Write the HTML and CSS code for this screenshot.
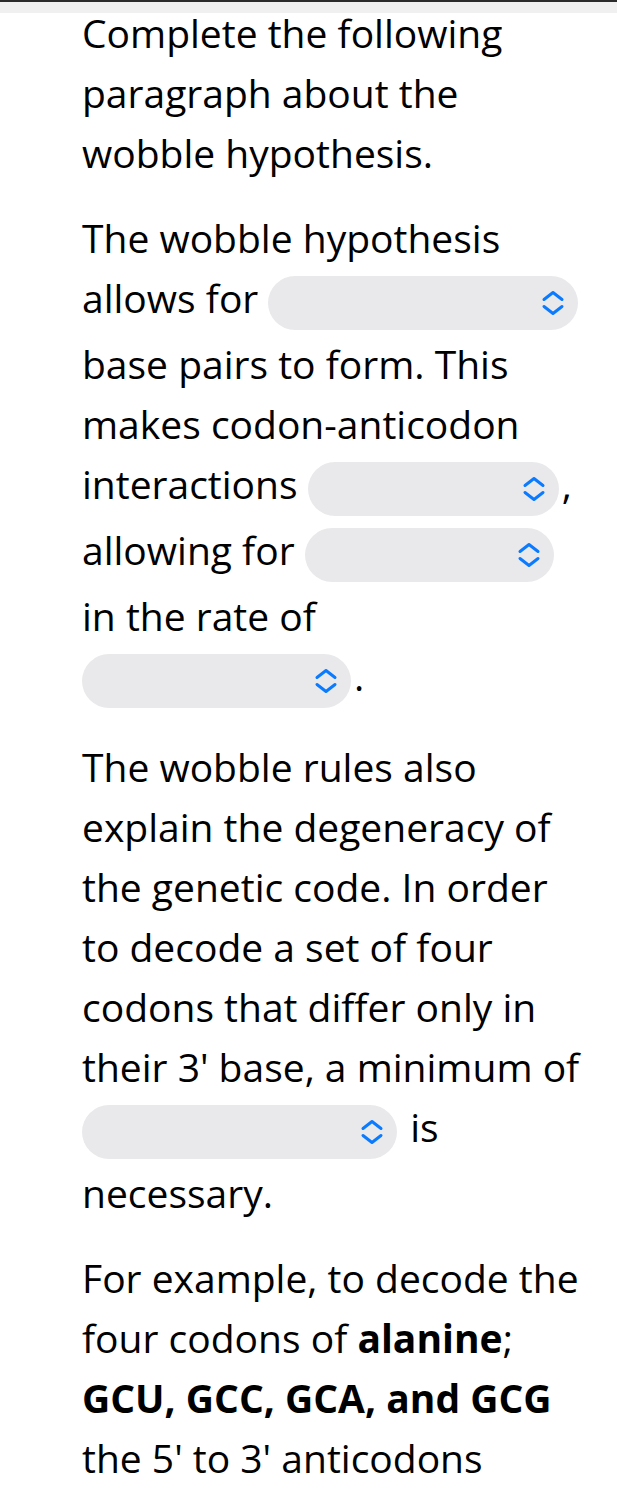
FILE: index.html
```html
<!DOCTYPE html>
<html lang="en">
<head>
<meta charset="utf-8">
<title>Wobble hypothesis</title>
<link rel="stylesheet" href="styles.css">
</head>
<body>
<div class="chrome">
  <div class="chrome-dark"></div>
  <div class="chrome-light"></div>
</div>
<main class="content">
  <p>Complete the following paragraph about the wobble hypothesis.</p>
  <p>The wobble hypothesis allows for <span class="dd w1"><svg class="chev" viewBox="0 0 24 26" width="24" height="26"><path d="M3 9.5 L12 2.5 L21 9.5 M3 16.5 L12 23.5 L21 16.5" fill="none" stroke="#0a7aff" stroke-width="3" stroke-linecap="round" stroke-linejoin="round"/></svg></span> base pairs to form. This makes codon-anticodon interactions <span class="dd w2"><svg class="chev" viewBox="0 0 24 26" width="24" height="26"><path d="M3 9.5 L12 2.5 L21 9.5 M3 16.5 L12 23.5 L21 16.5" fill="none" stroke="#0a7aff" stroke-width="3" stroke-linecap="round" stroke-linejoin="round"/></svg></span>, allowing for <span class="dd w3"><svg class="chev" viewBox="0 0 24 26" width="24" height="26"><path d="M3 9.5 L12 2.5 L21 9.5 M3 16.5 L12 23.5 L21 16.5" fill="none" stroke="#0a7aff" stroke-width="3" stroke-linecap="round" stroke-linejoin="round"/></svg></span> in the rate of <span class="dd w4"><svg class="chev" viewBox="0 0 24 26" width="24" height="26"><path d="M3 9.5 L12 2.5 L21 9.5 M3 16.5 L12 23.5 L21 16.5" fill="none" stroke="#0a7aff" stroke-width="3" stroke-linecap="round" stroke-linejoin="round"/></svg></span>.</p>
  <p>The wobble rules also explain the degeneracy of the genetic code. In order to decode a set of four codons that differ only in their 3' base, a minimum of <span class="dd w5"><svg class="chev" viewBox="0 0 24 26" width="24" height="26"><path d="M3 9.5 L12 2.5 L21 9.5 M3 16.5 L12 23.5 L21 16.5" fill="none" stroke="#0a7aff" stroke-width="3" stroke-linecap="round" stroke-linejoin="round"/></svg></span> is necessary.</p>
  <p>For example, to decode the four codons of <b>alanine</b>; <b>GCU, GCC, GCA, and GCG</b> the 5' to 3' anticodons</p>
</main>
</body>
</html>
```

FILE: styles.css
```css
html, body {
  margin: 0;
  padding: 0;
  background: #ffffff;
}

body {
  font-family: "Open Sans", "Noto Sans", "DejaVu Sans", sans-serif;
  font-size: 39px;
  line-height: 60px;
  color: #000000;
}

.chrome {
  position: fixed;
  top: 0;
  left: 0;
  right: 0;
  z-index: 2;
}

.chrome-dark {
  height: 2px;
  background: #2b2b2b;
}

.chrome-light {
  height: 11px;
  background: #f0f0f0;
}

.content {
  width: 500px;
  padding: 3px 0 0 82px;
}

.content p {
  margin: 0 0 25px 0;
}

.content b {
  font-weight: 700;
}

.dd {
  display: inline-block;
  box-sizing: border-box;
  height: 54px;
  padding: 14px 13px 0 0;
  margin: 0 3px 4px 0;
  border-radius: 27px;
  background: #e9e9eb;
  vertical-align: -21px;
}

.chev {
  display: block;
  margin-left: auto;
}

.w1 { width: 310px; }
.w2 { width: 251px; }
.w3 { width: 249px; }
.w4 { width: 269px; }
.w5 { width: 315px; }
```
